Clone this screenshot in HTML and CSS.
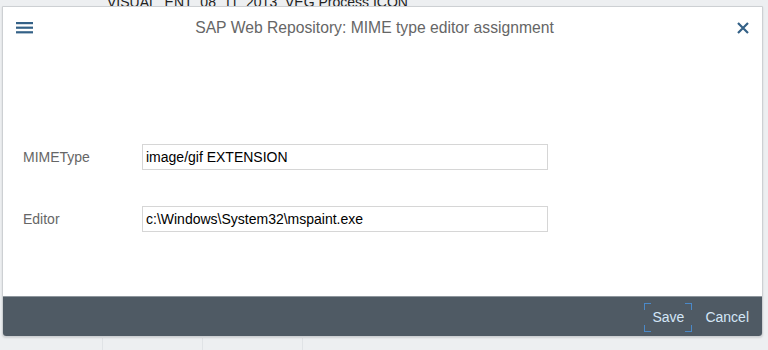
FILE: index.html
```html
<!DOCTYPE html>
<html>
<head>
<meta charset="utf-8">
<link rel="stylesheet" href="styles.css">
</head>
<body>
<div class="bg-top">VISUAL_ENT_08_11_2013_VEG Process ICON</div>
<div class="bg-bottom">
  <div class="cell"></div><div class="cell"></div><div class="cell"></div>
</div>

<div class="dialog">
  <div class="header">
    <svg class="menu" width="18" height="12" viewBox="0 0 18 12">
      <rect x="0" y="0" width="17" height="2.2" fill="#346187"/>
      <rect x="0" y="4.6" width="17" height="2.2" fill="#346187"/>
      <rect x="0" y="9.2" width="17" height="2.2" fill="#346187"/>
    </svg>
    <div class="title">SAP Web Repository: MIME type editor assignment</div>
    <svg class="close" width="12" height="12" viewBox="0 0 12 12">
      <path d="M1 1 L11 11 M11 1 L1 11" stroke="#346187" stroke-width="2.2" fill="none"/>
    </svg>
  </div>
  <div class="content">
    <div class="row">
      <label class="label">MIMEType</label>
      <div class="input">image/gif EXTENSION</div>
    </div>
    <div class="row">
      <label class="label">Editor</label>
      <div class="input">c:\Windows\System32\mspaint.exe</div>
    </div>
  </div>
  <div class="footer">
    <div class="btn focused">Save
      <span class="c tl"></span><span class="c tr"></span><span class="c bl"></span><span class="c br"></span>
    </div>
    <div class="btn">Cancel</div>
  </div>
</div>
</body>
</html>
```
FILE: styles.css
```css
html, body {
  margin: 0;
  padding: 0;
  width: 768px;
  height: 350px;
  overflow: hidden;
  background: #edeff1;
  font-family: "Liberation Sans", Arial, sans-serif;
  position: relative;
}
.bg-top {
  height: 20px;
  margin-top: -8px;
  padding-left: 107px;
  font-size: 14px;
  line-height: 20px;
  color: #222;
  white-space: nowrap;
}
.bg-bottom {
  position: absolute;
  left: 3px;
  top: 338px;
  display: flex;
  height: 12px;
}
.bg-bottom .cell {
  width: 100px;
  height: 12px;
  box-sizing: border-box;
  border-right: 1px solid #e0e3e6;
}
.dialog {
  position: absolute;
  left: 2px;
  top: 6px;
  width: 761px;
  height: 331px;
  box-sizing: border-box;
  background: #fff;
  border: 1px solid #cdd0d3;
  border-radius: 0 0 4px 4px;
  display: flex;
  flex-direction: column;
  overflow: hidden;
  box-shadow: 0 1px 2px rgba(0,0,0,0.12);
}
.header {
  height: 42px;
  display: flex;
  align-items: center;
  padding: 0 13px 0 13px;
  flex-shrink: 0;
}
.menu {
  display: block;
}
.title {
  flex: 1;
  text-align: center;
  font-size: 15.7px;
  color: #666;
  margin-top: 0;
  padding-right: 22px;
}
.close {
  display: block;
}
.content {
  flex: 1;
  padding: 95px 0 0 20px;
  display: flex;
  flex-direction: column;
  gap: 36px;
}
.row {
  display: flex;
  align-items: center;
}
.label {
  width: 119px;
  font-size: 14px;
  color: #666;
}
.input {
  width: 406px;
  height: 26px;
  box-sizing: border-box;
  border: 1px solid #d6d6d6;
  font-size: 14px;
  line-height: 24px;
  padding-left: 3px;
  color: #000;
}
.footer {
  height: 40px;
  flex-shrink: 0;
  background: #4f5a64;
  border-top: 1px solid #8e969d;
  display: flex;
  justify-content: flex-end;
  align-items: center;
  padding-right: 5px;
  padding-top: 2px;
  box-sizing: border-box;
}
.btn {
  position: relative;
  font-size: 14px;
  color: #d4e6f7;
  height: 29px;
  line-height: 29px;
  padding: 0 8px;
}
.btn.focused {
  margin-right: 5px;
}
.c {
  position: absolute;
  width: 6px;
  height: 6px;
  border-color: #4a89c9;
  border-style: solid;
  border-width: 0;
}
.tl { left: 0; top: 0; border-left-width: 1px; border-top-width: 1px; }
.tr { right: 0; top: 0; border-right-width: 1px; border-top-width: 1px; }
.bl { left: 0; bottom: 0; border-left-width: 1px; border-bottom-width: 1px; }
.br { right: 0; bottom: 0; border-right-width: 1px; border-bottom-width: 1px; }
```
